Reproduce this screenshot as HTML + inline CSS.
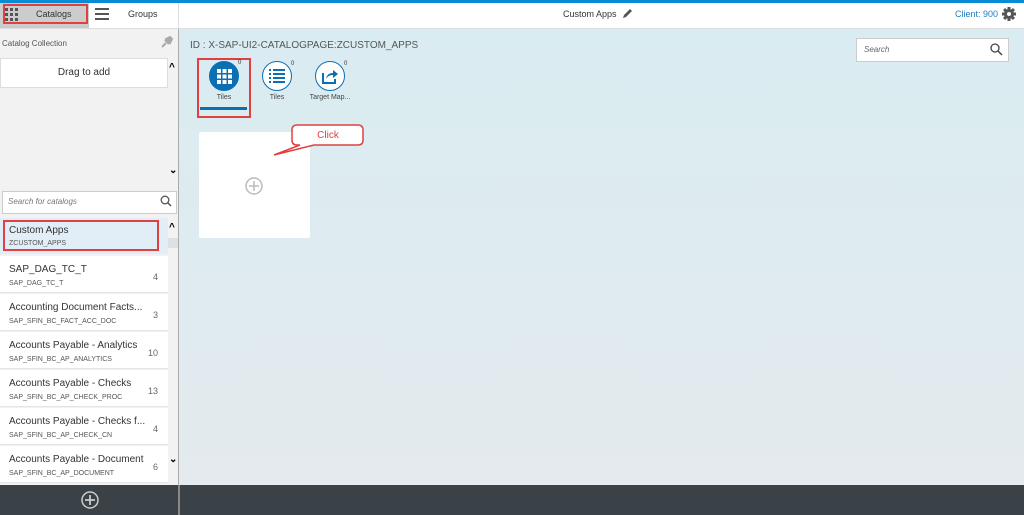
<!DOCTYPE html>
<html><head><style>
*{margin:0;padding:0;box-sizing:border-box}
body{width:1024px;height:515px;overflow:hidden;font-family:"Liberation Sans",sans-serif;background:#fff;position:relative}
.abs{position:absolute}
.main{left:179px;top:29px;width:845px;height:456px;background:linear-gradient(#d9ecf1,#e4eaee)}
.item{position:absolute;left:0;width:168px;height:37px;background:#fff;border-bottom:1px solid #e5e5e5}
.item .t{position:absolute;left:9px;top:8px;font-size:10px;color:#333}
.item .s{position:absolute;left:9px;top:24px;font-size:7px;color:#555}
.item .n{position:absolute;right:10px;top:16px;font-size:9px;color:#666}
.circ{position:absolute;width:30px;height:30px;border-radius:50%;border:1px solid #0a6fb3;background:#fff}
.lbl{position:absolute;font-size:7px;color:#444;text-align:center}
</style></head><body>
<div class="abs" style="left:0;top:0;width:1024px;height:3px;background:#0a8bd6"></div>
<div class="abs" style="left:0;top:3px;width:1024px;height:26px;background:#fff;border-bottom:1px solid #ddd"></div>
<div class="abs" style="left:0;top:3px;width:89px;height:25px;background:#ccc"></div>
<div class="abs" style="left:3px;top:4px;width:85px;height:20px;border:2px solid #e04040"></div>
<svg class="abs" style="left:5px;top:8px" width="14" height="14"><g fill="#555"><rect x="0" y="0" width="3" height="3"/><rect x="5" y="0" width="3" height="3"/><rect x="10" y="0" width="3" height="3"/><rect x="0" y="5" width="3" height="3"/><rect x="5" y="5" width="3" height="3"/><rect x="10" y="5" width="3" height="3"/><rect x="0" y="10" width="3" height="3"/><rect x="5" y="10" width="3" height="3"/><rect x="10" y="10" width="3" height="3"/></g></svg>
<div class="abs" style="left:36px;top:9px;font-size:9px;color:#333">Catalogs</div>
<svg class="abs" style="left:95px;top:8px" width="14" height="12"><g fill="#555"><rect y="0" width="14" height="2"/><rect y="5" width="14" height="2"/><rect y="10" width="14" height="2"/></g></svg>
<div class="abs" style="left:128px;top:9px;font-size:9px;color:#333">Groups</div>
<div class="abs" style="left:178px;top:3px;width:1px;height:26px;background:#ddd"></div>
<div class="abs" style="left:563px;top:9px;font-size:9px;color:#333">Custom Apps</div>
<svg class="abs" style="left:622px;top:8px" width="11" height="11"><path d="M1 10 L2 7 L8 1 L10 3 L4 9 Z" fill="#555"/></svg>
<div class="abs" style="left:955px;top:9px;font-size:9px;color:#1a7fc4">Client: 900</div>
<svg class="abs" style="left:1002px;top:7px" width="14" height="14" viewBox="0 0 14 14"><g fill="#555"><circle cx="7" cy="7" r="5"/><rect x="5.5" y="0" width="3" height="14"/><rect x="0" y="5.5" width="14" height="3"/><rect x="5.5" y="0" width="3" height="14" transform="rotate(45 7 7)"/><rect x="5.5" y="0" width="3" height="14" transform="rotate(-45 7 7)"/></g><circle cx="7" cy="7" r="2" fill="#fff"/></svg>

<div class="abs" style="left:0;top:29px;width:178px;height:456px;background:#f2f2f2"></div>
<div class="abs" style="left:178px;top:29px;width:1px;height:486px;background:#aaa"></div>
<div class="abs" style="left:2px;top:39px;font-size:8px;color:#555">Catalog Collection</div>
<svg class="abs" style="left:160px;top:35px" width="14" height="14"><path d="M2 12 L6 8 M5 5 L9 9 M6 4 L10 8 L12 4 L10 2 Z" stroke="#aaa" stroke-width="2" fill="#aaa"/></svg>
<div class="abs" style="left:0;top:58px;width:168px;height:30px;background:#fff;border:1px solid #ddd;text-align:center;font-size:10px;color:#333;line-height:28px">Drag to add</div>
<div class="abs" style="left:169px;top:62px;font-size:10px;color:#000;font-weight:bold">^</div>
<div class="abs" style="left:169px;top:165px;font-size:10px;color:#000;font-weight:bold">⌄</div>
<div class="abs" style="left:2px;top:191px;width:175px;height:23px;background:#fff;border:1px solid #ccc"></div>
<div class="abs" style="left:8px;top:197px;font-size:8px;color:#777;font-style:italic">Search for catalogs</div>
<svg class="abs" style="left:160px;top:195px" width="12" height="12"><circle cx="5" cy="5" r="3.8" stroke="#555" stroke-width="1.3" fill="none"/><path d="M8 8 L11 11" stroke="#555" stroke-width="1.5"/></svg>
<div class="abs" style="left:0;top:218px;width:168px;height:36px;background:#e1eef7"></div>
<div class="abs" style="left:3px;top:220px;width:156px;height:31px;border:2px solid #e04040"></div>
<div class="abs" style="left:9px;top:225px;font-size:10px;color:#333">Custom Apps</div>
<div class="abs" style="left:9px;top:240px;font-size:7px;color:#555">ZCUSTOM_APPS</div>
<div class="abs" style="left:169px;top:222px;font-size:10px;font-weight:bold">^</div>
<div class="abs" style="left:168px;top:238px;width:10px;height:10px;background:#e0e0e0"></div>
<div class="item" style="top:256px"><div class="t">SAP_DAG_TC_T</div><div class="s">SAP_DAG_TC_T</div><div class="n">4</div></div>
<div class="item" style="top:294px"><div class="t">Accounting Document Facts...</div><div class="s">SAP_SFIN_BC_FACT_ACC_DOC</div><div class="n">3</div></div>
<div class="item" style="top:332px"><div class="t">Accounts Payable - Analytics</div><div class="s">SAP_SFIN_BC_AP_ANALYTICS</div><div class="n">10</div></div>
<div class="item" style="top:370px"><div class="t">Accounts Payable - Checks</div><div class="s">SAP_SFIN_BC_AP_CHECK_PROC</div><div class="n">13</div></div>
<div class="item" style="top:408px"><div class="t">Accounts Payable - Checks f...</div><div class="s">SAP_SFIN_BC_AP_CHECK_CN</div><div class="n">4</div></div>
<div class="item" style="top:446px"><div class="t">Accounts Payable - Document</div><div class="s">SAP_SFIN_BC_AP_DOCUMENT</div><div class="n">6</div></div>
<div class="abs" style="left:169px;top:454px;font-size:10px;font-weight:bold">⌄</div>

<div class="abs main"></div>
<div class="abs" style="left:190px;top:40px;font-size:10px;color:#555">ID : X-SAP-UI2-CATALOGPAGE:ZCUSTOM_APPS</div>
<div class="abs" style="left:856px;top:38px;width:153px;height:24px;background:#fff;border:1px solid #ccc"></div>
<div class="abs" style="left:864px;top:45px;font-size:8px;color:#666;font-style:italic">Search</div>
<svg class="abs" style="left:990px;top:43px" width="13" height="13"><circle cx="5" cy="5" r="4" stroke="#444" stroke-width="1.3" fill="none"/><path d="M8 8 L12 12" stroke="#444" stroke-width="1.5"/></svg>

<div class="abs" style="left:197px;top:58px;width:54px;height:60px;border:2px solid #e04040"></div>
<div class="circ" style="left:209px;top:61px;background:#0a6fb3"></div>
<svg class="abs" style="left:217px;top:69px" width="15" height="15"><g fill="#fff"><rect x="0" y="0" width="4" height="4"/><rect x="5.5" y="0" width="4" height="4"/><rect x="11" y="0" width="4" height="4"/><rect x="0" y="5.5" width="4" height="4"/><rect x="5.5" y="5.5" width="4" height="4"/><rect x="11" y="5.5" width="4" height="4"/><rect x="0" y="11" width="4" height="4"/><rect x="5.5" y="11" width="4" height="4"/><rect x="11" y="11" width="4" height="4"/></g></svg>
<div class="abs" style="left:238px;top:60px;font-size:6px;color:#333">0</div>
<div class="lbl" style="left:204px;top:94px;width:40px">Tiles</div>
<div class="abs" style="left:200px;top:107px;width:47px;height:3px;background:#0a6fb3"></div>
<div class="circ" style="left:262px;top:61px"></div>
<svg class="abs" style="left:269px;top:68px" width="16" height="16"><g fill="#0a6fb3"><rect x="0" y="1" width="2" height="2"/><rect x="4" y="1" width="12" height="2"/><rect x="0" y="5" width="2" height="2"/><rect x="4" y="5" width="12" height="2"/><rect x="0" y="9" width="2" height="2"/><rect x="4" y="9" width="12" height="2"/><rect x="0" y="13" width="2" height="2"/><rect x="4" y="13" width="12" height="2"/></g></svg>
<div class="abs" style="left:291px;top:61px;font-size:6px;color:#333">0</div>
<div class="lbl" style="left:257px;top:94px;width:40px">Tiles</div>
<div class="circ" style="left:315px;top:61px"></div>
<svg class="abs" style="left:322px;top:68px" width="16" height="16"><path d="M1 5 V15 H13 V11" stroke="#0a6fb3" stroke-width="2" fill="none"/><path d="M4 11 C5 6 8 5 11 5 V2 L16 6 L11 10 V7 C8 7 6 8 4 11Z" fill="#0a6fb3"/></svg>
<div class="abs" style="left:344px;top:61px;font-size:6px;color:#333">0</div>
<div class="lbl" style="left:300px;top:94px;width:60px">Target Map...</div>

<div class="abs" style="left:199px;top:132px;width:111px;height:106px;background:#fff;border-radius:2px"></div>
<svg class="abs" style="left:244px;top:176px" width="20" height="20"><circle cx="10" cy="10" r="8" stroke="#bbb" stroke-width="1.5" fill="none"/><path d="M10 5 V15 M5 10 H15" stroke="#bbb" stroke-width="1.5"/></svg>
<svg class="abs" style="left:270px;top:122px" width="100" height="36"><path d="M27 3 H88 Q93 3 93 8 V18 Q93 23 88 23 H44 L4 33 L30 23 H27 Q22 23 22 18 V8 Q22 3 27 3Z" fill="#fff" stroke="#e04040" stroke-width="1.5"/><text x="58" y="16" font-size="10" fill="#e04040" text-anchor="middle" font-family="Liberation Sans">Click</text></svg>

<div class="abs" style="left:0;top:485px;width:1024px;height:30px;background:#3a4147"></div>
<div class="abs" style="left:178px;top:485px;width:2px;height:30px;background:#888"></div>
<svg class="abs" style="left:80px;top:490px" width="20" height="20"><circle cx="10" cy="10" r="8" stroke="#ccc" stroke-width="1.5" fill="none"/><path d="M10 5 V15 M5 10 H15" stroke="#ccc" stroke-width="1.8"/></svg>
</body></html>
